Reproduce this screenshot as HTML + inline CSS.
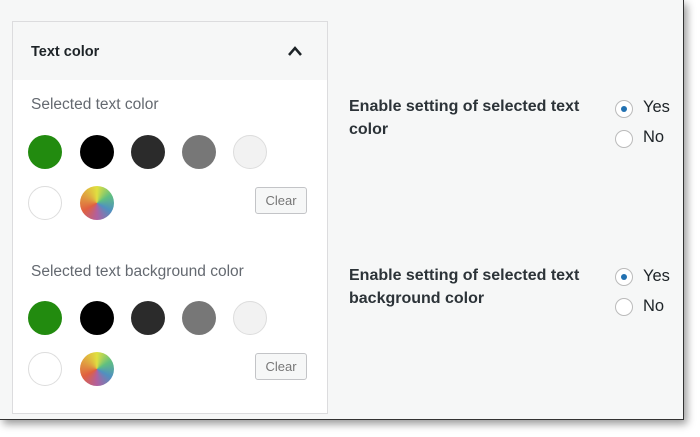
<!DOCTYPE html>
<html><head><style>
body{margin:0;width:700px;height:437px;background:#fff;position:relative;overflow:hidden;font-family:"Liberation Sans",sans-serif}
.frame{position:absolute;left:0;top:0;width:683px;height:419px;border:1px solid #333;border-top:none;border-left:none;background:#f6f7f7;box-shadow:3px 4px 8px rgba(0,0,0,.4)}
.panel{position:absolute;left:12px;top:21px;width:314px;height:391px;border:1px solid #dcdcde;background:#fff}
.hdr{height:58px;background:#f6f7f7;position:relative}
.hdr span{position:absolute;left:18px;top:22px;font-size:14.5px;font-weight:bold;color:#1d2327}
.lbl{position:absolute;left:31px;font-size:15.5px;color:#646970}
.c{position:absolute;width:34px;height:34px;border-radius:50%;box-sizing:border-box}
.clr{position:absolute;left:255px;width:52px;height:27px;box-sizing:border-box;border:1px solid #c3c4c7;border-radius:3px;background:#f6f7f7;color:#777;font-size:13px;text-align:center;line-height:25px}
.q{position:absolute;left:349px;font-size:16px;font-weight:bold;color:#2c3338;line-height:23px;width:260px}
.r{position:absolute;left:615px;width:18px;height:18px;border-radius:50%;border:1px solid #bbb;background:#fff;box-sizing:border-box}
.r.on::after{content:"";position:absolute;left:5px;top:5px;width:6px;height:6px;border-radius:50%;background:#2271b1}
.rt{position:absolute;left:643px;font-size:16.5px;color:#1d2327}
</style></head><body>
<div class="frame"></div>
<div class="panel"><div class="hdr"><span>Text color</span>
<svg style="position:absolute;left:274px;top:23px" width="16" height="12" viewBox="0 0 16 12"><path d="M2 10L8 3L14 10" fill="none" stroke="#1d2327" stroke-width="2.5"/></svg></div></div>
<div class="lbl" style="top:96px">Selected text color</div>
<div class="lbl" style="top:263px">Selected text background color</div>

<div class="c" style="left:28px;top:135px;background:#228b0f"></div>
<div class="c" style="left:80px;top:135px;background:#000"></div>
<div class="c" style="left:131px;top:135px;background:#2b2b2b"></div>
<div class="c" style="left:182px;top:135px;background:#777"></div>
<div class="c" style="left:233px;top:135px;background:#f2f2f2;border:1px solid #ddd"></div>
<div class="c" style="left:28px;top:186px;background:#fff;border:1px solid #ddd"></div>
<div class="c" style="left:80px;top:186px;background:conic-gradient(#e0e040,#60c080,#5090c0,#b060a0,#e06040,#e0a040,#e0e040)"></div>
<div class="clr" style="top:187px">Clear</div>

<div class="c" style="left:28px;top:301px;background:#228b0f"></div>
<div class="c" style="left:80px;top:301px;background:#000"></div>
<div class="c" style="left:131px;top:301px;background:#2b2b2b"></div>
<div class="c" style="left:182px;top:301px;background:#777"></div>
<div class="c" style="left:233px;top:301px;background:#f2f2f2;border:1px solid #ddd"></div>
<div class="c" style="left:28px;top:352px;background:#fff;border:1px solid #ddd"></div>
<div class="c" style="left:80px;top:352px;background:conic-gradient(#e0e040,#60c080,#5090c0,#b060a0,#e06040,#e0a040,#e0e040)"></div>
<div class="clr" style="top:353px">Clear</div>

<div class="q" style="top:95px">Enable setting of selected text color</div>
<div class="q" style="top:264px">Enable setting of selected text background color</div>
<div class="r on" style="top:100px"></div><div class="rt" style="top:98px">Yes</div>
<div class="r" style="top:130px"></div><div class="rt" style="top:128px">No</div>
<div class="r on" style="top:268px"></div><div class="rt" style="top:267px">Yes</div>
<div class="r" style="top:298px"></div><div class="rt" style="top:297px">No</div>
</body></html>
